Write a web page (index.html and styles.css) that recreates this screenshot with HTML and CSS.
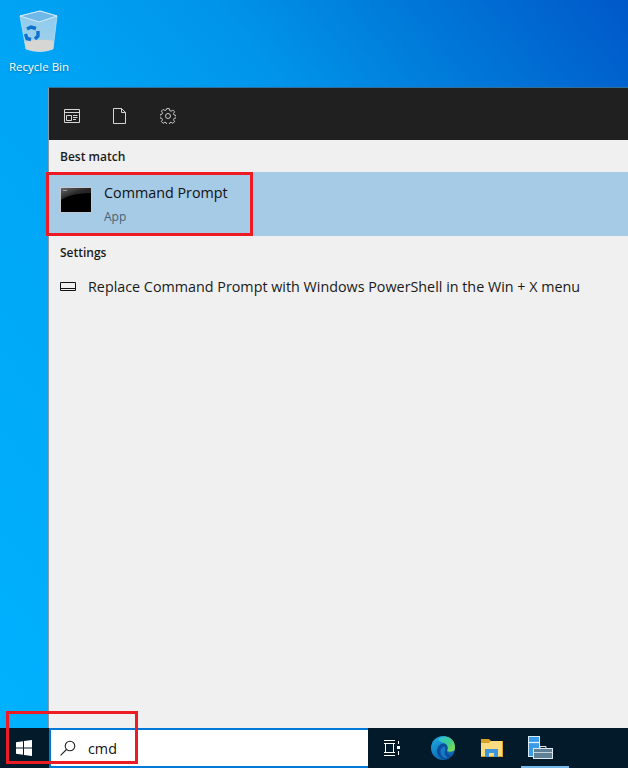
FILE: index.html
```html
<!DOCTYPE html>
<html lang="en">
<head>
<meta charset="utf-8">
<title>Search cmd</title>
<link rel="stylesheet" href="styles.css">
</head>
<body>
<div class="desktop">
  <div class="desktop-icon">
    <svg class="bin" width="40" height="43" viewBox="0 0 40 43">
      <defs>
        <linearGradient id="binBody" x1="0" y1="0" x2="0" y2="1"><stop offset="0" stop-color="#8ecbf0"/><stop offset=".72" stop-color="#9dcfe9"/><stop offset="1" stop-color="#cdd6d8"/></linearGradient>
      </defs>
      <path d="M1 6 L21 1 L38 6 L34 39 Q21 44 7 39 Z" fill="url(#binBody)" stroke="#b9dff5" stroke-width=".8"/>
      <path d="M1 6 L21 1 L38 6 L20 12 Z" fill="#6fb8e8" stroke="#d4ebf8" stroke-width="1"/>
      <path d="M5.500 32 Q20 28 35 31 L34 39 Q21 44 7 39 Z" fill="#d6d6d3"/>
      <g fill="none" stroke="#0d72cf" stroke-width="3.400">
        <path d="M8 19 L12 17 L17 18.500"/>
        <path d="M19 21 L19 26 L16 29"/>
        <path d="M12 29.500 L8 28.500 L6.500 24"/>
      </g>
    </svg>
    <span class="desktop-label">Recycle Bin</span>
  </div>

  <section class="search-panel">
    <header class="panel-tabs">
      <svg width="16" height="14" viewBox="0 0 16 14" fill="none" stroke="#d6d6d6"><path d="M.5.5h15v13H.5zM.5 3.500h15M2.500 6.500h5v5h-5zM9 6.500h4.500M9 8.500h4.500M9 10.500h3"/></svg>
      <svg width="13" height="16" viewBox="0 0 13 16" fill="none" stroke="#d6d6d6"><path d="M.5.5h8l4 4v11H.5zM8.500.5v4h4"/></svg>
      <svg class="tab-gear" width="16" height="16" viewBox="0 0 16 16" fill="none" stroke="#c8c8c8"><circle cx="8" cy="8" r="2.500"/><path d="M6.800.5h2.400l.4 2 1.500.7 1.800-1.100 1.700 1.700-1.100 1.800.7 1.500 2 .4v2.400l-2 .4-.7 1.500 1.100 1.800-1.700 1.700-1.800-1.100-1.500.7-.4 2H6.800l-.4-2-1.500-.7-1.800 1.100-1.700-1.700 1.100-1.800-.7-1.500-2-.4V6.800l2-.4.7-1.500-1.100-1.800 1.700-1.700 1.800 1.100 1.500-.7z"/></svg>
    </header>
    <div class="panel-body">
      <h2 class="group-title">Best match</h2>
      <div class="best-match">
        <svg class="cmd-icon" width="32" height="26" viewBox="0 0 32 26">
          <defs><linearGradient id="cmdFill" x1="0" y1="0" x2="1" y2="1"><stop offset="0" stop-color="#6a6a6a"/><stop offset=".45" stop-color="#2a2a2a"/><stop offset="1" stop-color="#141414"/></linearGradient></defs>
          <rect x=".5" y=".5" width="31" height="25" fill="#000" stroke="#c3c9ce"/>
          <path d="M1 1h30v5Q11 6 1 13z" fill="url(#cmdFill)"/>
          <path d="M3 3h4v1H3z" fill="#9a9a9a"/>
        </svg>
        <div class="best-text">
          <span class="best-name">Command Prompt</span>
          <span class="best-kind">App</span>
        </div>
      </div>
      <h2 class="group-title">Settings</h2>
      <div class="setting-row">
        <svg width="16" height="9" viewBox="0 0 16 9" fill="none" stroke="#111"><path d="M.5.500h15v8H.5zM.5 6.500h15"/></svg>
        <span>Replace Command Prompt with Windows PowerShell in the Win + X menu</span>
      </div>
    </div>
  </section>

  <footer class="taskbar">
    <div class="start">
      <svg width="16" height="16" viewBox="0 0 16 16" fill="#fff"><path d="M0 2.300 7 1.200V7.500H0zM8 1 16 0V7.500H8zM0 8.500H7V14.800L0 13.700zM8 8.500H16V16L8 15z"/></svg>
    </div>
    <div class="search-box">
      <svg width="16" height="16" viewBox="0 0 16 16" fill="none" stroke="#222" stroke-width="1.100"><circle cx="10" cy="6" r="4.800"/><path d="M6.500 9.500.6 15.400"/></svg>
      <span>cmd</span>
    </div>
    <div class="task-apps">
      <svg class="app-task" width="16" height="16" viewBox="0 0 16 16" fill="none" stroke="#fff"><path d="M0 .5h11M0 15.500h11M0 3.500h11M0 12.500h11M1.500 3.500v9M9.500 3.500v9M14.500 1v3M14.500 11v4"/><rect x="13" y="6" width="3" height="3" fill="#fff" stroke="none"/></svg>
      <svg class="app-edge" width="24" height="24" viewBox="0 0 24 24">
        <defs>
          <linearGradient id="edgeA" x1="0" y1="0" x2=".6" y2="1"><stop offset="0" stop-color="#1fb0e6"/><stop offset="1" stop-color="#0b5fae"/></linearGradient>
          <linearGradient id="edgeB" x1="0" y1="0" x2="1" y2=".8"><stop offset="0" stop-color="#2fbfe0"/><stop offset=".6" stop-color="#3fcf8a"/><stop offset="1" stop-color="#86dc4c"/></linearGradient>
        </defs>
        <circle cx="12" cy="12" r="12" fill="url(#edgeA)"/>
        <path d="M7 3.500C10 0 17-1 21 3.500 24 6.500 24.500 11 23.500 14c-1 1.500-5 2.500-7.500 1 1.500-3 .5-6-2-7.500C11 6 8.500 5.500 7 3.500z" fill="url(#edgeB)"/>
        <path d="M6 15c0-4 3-7.500 7-7.500 3 .5 4.500 3.500 3 7-.3 1.500 1 3.500 3 4.500 1 .5 1.500 1 1.500 1-2 2-4 3-7 3.200C9 22.500 6 19 6 15z" fill="#0a4f9a"/>
        <path d="M9.500 15c0-2.500 2-4.500 4-4.500 1 1 1 3 .2 5-.4 2 .6 4.500 2.800 6.300C12 23 9.500 19 9.500 15z" fill="#1a78c8"/>
      </svg>
      <svg class="app-folder" width="22" height="18" viewBox="0 0 22 18">
        <path d="M0 0h8l2 2h12v16H0z" fill="#d9a12a"/>
        <path d="M0 4h8l2-2h11v15H0z" fill="#fbdc80"/>
        <path d="M4 10h13v8h-4v-4H8v4H4z" fill="#3d96dc"/>
      </svg>
      <div class="app-server">
        <svg width="26" height="24" viewBox="0 0 26 24">
          <rect x="1.500" y=".5" width="11" height="20" fill="#3a9ce8" stroke="#d6ebfa"/>
          <path d="M2 6.500h10" stroke="#e8f4fc" stroke-width="1.200"/>
          <rect x="6.500" y="12.500" width="19" height="10" fill="#5f8198" stroke="#dfe8ee"/>
          <path d="M13 12.500V10.500h6v2" stroke="#dfe8ee" fill="none"/>
          <path d="M6 16.500h20" stroke="#dfe8ee" stroke-width=".8"/>
        </svg>
      </div>
    </div>
  </footer>

  <div class="mark mark-match"></div>
  <div class="mark mark-start"></div>
</div>
</body>
</html>
```

FILE: styles.css
```css
* { box-sizing: border-box; }
html, body { margin: 0; height: 100%; }
body { overflow: hidden; font-family: "Open Sans", "Noto Sans", sans-serif; }

.desktop {
  position: relative;
  width: 628px;
  height: 768px;
  overflow: hidden;
  display: flex;
  flex-direction: column;
  justify-content: flex-end;
  background: linear-gradient(to top right, #00b2ff 0%, #00a4f4 50%, #0094ea 67%, #007cdb 80%, #0058c8 100%);
}

.desktop-icon {
  position: absolute;
  left: 0;
  top: 10px;
  width: 78px;
  display: flex;
  flex-direction: column;
  align-items: center;
  gap: 6px;
}
.desktop-label {
  font-size: 11.500px;
  line-height: 15px;
  color: #fff;
  text-shadow: 0 1px 2px rgba(0,0,0,.35);
}

.search-panel {
  position: absolute;
  left: 48px;
  top: 87px;
  width: 580px;
  height: 641px;
  display: flex;
  flex-direction: column;
  background: #f0f0f0;
  border-top: 1px solid #2f6f98;
  border-left: 1px solid #8a9aa6;
}
.panel-tabs {
  flex: none;
  height: 52px;
  display: flex;
  align-items: center;
  gap: 33px;
  padding: 4px 0 0 15px;
  background: #202020;
}
.tab-gear { margin-left: 1px; }
.panel-body { flex: 1; }
.group-title {
  margin: 0;
  padding-left: 11px;
  height: 32px;
  font-size: 12px;
  font-weight: 600;
  line-height: 33px;
  color: #1a1a1a;
}
.best-match {
  height: 64px;
  display: flex;
  align-items: center;
  padding-left: 11px;
  gap: 12px;
  background: #a6cbe7;
}
.cmd-icon { margin-top: -9px; }
.best-text { display: flex; flex-direction: column; }
.best-name { font-size: 14.330px; line-height: 20px; color: #111; margin-top: -1px; }
.best-kind { font-size: 12px; line-height: 16px; margin-top: 6px; color: #4a5f70; }
.setting-row {
  height: 36px;
  display: flex;
  align-items: center;
  padding-left: 11px;
  gap: 12px;
  font-size: 14.330px;
  color: #1a1a1a;
}

.taskbar {
  flex: none;
  height: 40px;
  display: flex;
  background: #021a29;
}
.start {
  flex: none;
  width: 49px;
  display: flex;
  align-items: center;
  justify-content: center;
  padding-right: 1px;
}
.search-box {
  flex: none;
  width: 319px;
  padding-left: 9px;
  display: flex;
  align-items: center;
  gap: 12px;
  background: #fff;
  border: solid #0078d7;
  border-width: 2px 0 2px 2px;
  font-size: 14.330px;
  color: #111;
}
.task-apps {
  flex: 1;
  display: flex;
  align-items: center;
}
.app-task { margin-left: 16px; }
.app-edge { margin-left: 31px; }
.app-folder { margin-left: 26px; }
.app-server {
  margin-left: 18px;
  flex: none;
  width: 48px;
  height: 40px;
  padding: 8px 0 0 6px;
  border-bottom: 2px solid #76b9ed;
}

.mark {
  position: absolute;
  border: 3px solid #ed1c24;
  pointer-events: none;
}
.mark-match { left: 46px; top: 172px; width: 207px; height: 64px; }
.mark-start { left: 6px; top: 711px; width: 132px; height: 53px; }
```
